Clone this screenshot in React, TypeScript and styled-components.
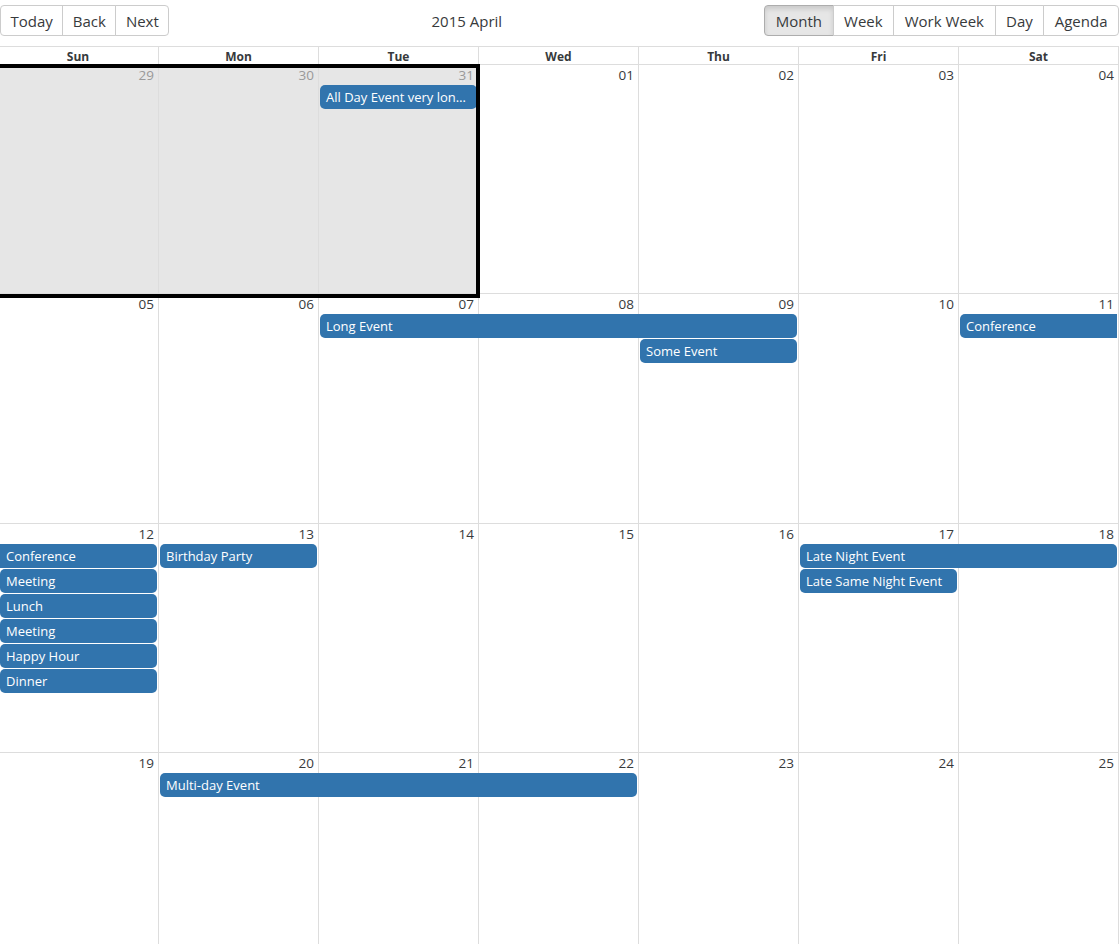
import styled, { createGlobalStyle } from 'styled-components';

type Day = { label: string; off?: boolean };
type CalEvent = {
  title: string;
  col: number;
  span: number;
  level: number;
  prior?: boolean;
  after?: boolean;
};
type Week = { days: Day[]; events: CalEvent[]; height: number };

const pad = (n: number) => (n < 10 ? '0' + n : String(n));

const makeDays = (nums: number[], offFn: (n: number, i: number) => boolean): Day[] =>
  nums.map((n, i) => ({ label: pad(n), off: offFn(n, i) }));

// only the four weeks that fit in the window
const weeks: Week[] = [
  {
    height: 228,
    days: makeDays([29, 30, 31, 1, 2, 3, 4], (_, i) => i < 3),
    events: [{ title: 'All Day Event very long title', col: 2, span: 1, level: 0 }],
  },
  {
    height: 230,
    days: makeDays([5, 6, 7, 8, 9, 10, 11], () => false),
    events: [
      { title: 'Long Event', col: 2, span: 3, level: 0 },
      { title: 'Conference', col: 6, span: 1, level: 0, after: true },
      { title: 'Some Event', col: 4, span: 1, level: 1 },
    ],
  },
  {
    height: 229,
    days: makeDays([12, 13, 14, 15, 16, 17, 18], () => false),
    events: [
      { title: 'Conference', col: 0, span: 1, level: 0, prior: true },
      { title: 'Meeting', col: 0, span: 1, level: 1 },
      { title: 'Lunch', col: 0, span: 1, level: 2 },
      { title: 'Meeting', col: 0, span: 1, level: 3 },
      { title: 'Happy Hour', col: 0, span: 1, level: 4 },
      { title: 'Dinner', col: 0, span: 1, level: 5 },
      { title: 'Birthday Party', col: 1, span: 1, level: 0 },
      { title: 'Late Night Event', col: 5, span: 2, level: 0 },
      { title: 'Late Same Night Event', col: 5, span: 1, level: 1 },
    ],
  },
  {
    height: 229,
    days: makeDays([19, 20, 21, 22, 23, 24, 25], () => false),
    events: [{ title: 'Multi-day Event', col: 1, span: 3, level: 0 }],
  },
];

const weekdays = ['Sun', 'Mon', 'Tue', 'Wed', 'Thu', 'Fri', 'Sat'];
const views = ['Month', 'Week', 'Work Week', 'Day', 'Agenda'];

const GlobalStyle = createGlobalStyle`
  html, body {
    margin: 0;
    padding: 0;
    background: #fff;
    overflow: hidden;
  }
  body {
    font-family: 'Open Sans', 'Liberation Sans', sans-serif;
    color: #373a3c;
  }
`;

const Page = styled.div`
  width: 1119px;
  height: 944px;
  overflow: hidden;
`;

const Toolbar = styled.div`
  display: flex;
  align-items: center;
  padding-top: 5px;
  margin-bottom: 10px;
  font-size: 15px;
`;

const BtnGroup = styled.div`
  display: flex;
`;

const Btn = styled.button<{ $active?: boolean; $padX: number }>`
  height: 31px;
  margin: 0;
  padding: 0 ${p => p.$padX}px;
  font: inherit;
  color: #373a3c;
  background: ${p => (p.$active ? '#e6e6e6' : '#fff')};
  border: 1px solid ${p => (p.$active ? '#adadad' : '#ccc')};
  box-shadow: ${p => (p.$active ? 'inset 0 3px 5px rgba(0, 0, 0, 0.125)' : 'none')};
  border-radius: 0;
  white-space: nowrap;

  & + & {
    margin-left: -1px;
  }
  &:first-child {
    border-radius: 4px 0 0 4px;
  }
  &:last-child {
    border-radius: 0 4px 4px 0;
  }
`;

const Label = styled.span`
  flex: 1;
  padding: 0 10px;
  text-align: center;
`;

const MonthView = styled.div`
  margin-left: -2px;
  width: 1121px;
  box-sizing: border-box;
  border-top: 1px solid #ddd;
  border-right: 1px solid #ddd;
`;

const HeaderRow = styled.div`
  display: grid;
  grid-template-columns: repeat(7, 160px);
`;

const HeaderCell = styled.div<{ $first: boolean }>`
  height: 18px;
  box-sizing: border-box;
  padding-top: 1px;
  line-height: 17px;
  text-align: center;
  font-size: 12px;
  font-weight: 700;
  color: #373a3c;
  border-bottom: 1px solid #ddd;
  border-left: ${p => (p.$first ? 'none' : '1px solid #ddd')};
`;

const MonthRow = styled.div<{ $first: boolean; $height: number }>`
  display: grid;
  grid-template-columns: repeat(7, 160px);
  grid-template-rows: 20px repeat(6, 25px) 1fr;
  height: ${p => p.$height}px;
  box-sizing: border-box;
  border-top: ${p => (p.$first ? 'none' : '1px solid #ddd')};
`;

const DayBg = styled.div<{ $col: number; $off?: boolean }>`
  grid-column: ${p => p.$col + 1};
  grid-row: 1 / -1;
  border-left: ${p => (p.$col === 0 ? 'none' : '1px solid #ddd')};
  background: ${p => (p.$off ? '#e6e6e6' : 'transparent')};
`;

const DateCell = styled.div<{ $col: number; $off?: boolean }>`
  grid-column: ${p => p.$col + 1};
  grid-row: 1;
  padding-right: 4px;
  text-align: right;
  font-size: 13.5px;
  line-height: 20px;
  color: ${p => (p.$off ? '#999' : '#373a3c')};
`;

const Segment = styled.div<{ $col: number; $span: number; $level: number }>`
  grid-column: ${p => p.$col + 1} / span ${p => p.$span};
  grid-row: ${p => p.$level + 2};
  min-width: 0;
  padding: 0 1px 1px 2px;
  z-index: 1;
`;

const EventBox = styled.div<{ $prior?: boolean; $after?: boolean }>`
  height: 24px;
  line-height: 24px;
  padding: 0 5px 0 6px;
  box-sizing: border-box;
  background: #3174ad;
  color: #fff;
  font-size: 13px;
  border-radius: ${p => (p.$prior ? '0' : '5px')} ${p => (p.$after ? '0 0' : '5px 5px')}
    ${p => (p.$prior ? '0' : '5px')};
  white-space: nowrap;
  overflow: hidden;
  text-overflow: ellipsis;
  cursor: pointer;
`;

const SelectionFrame = styled.div`
  grid-column: 1 / 4;
  grid-row: 1 / -1;
  margin: -1px -1.5px -5px -10px;
  border: 4.4px solid #000;
  z-index: 2;
  pointer-events: none;
`;

export default function App() {
  return (
    <Page>
      <GlobalStyle />
      <Toolbar>
        <BtnGroup>
          <Btn $padX={9.5}>Today</Btn>
          <Btn $padX={9.5}>Back</Btn>
          <Btn $padX={9.5}>Next</Btn>
        </BtnGroup>
        <Label>2015 April</Label>
        <BtnGroup>
          {views.map(v => (
            <Btn key={v} $padX={10.5} $active={v === 'Month'}>
              {v}
            </Btn>
          ))}
        </BtnGroup>
      </Toolbar>
      <MonthView>
        <HeaderRow>
          {weekdays.map((d, i) => (
            <HeaderCell key={d} $first={i === 0}>
              {d}
            </HeaderCell>
          ))}
        </HeaderRow>
        {weeks.map((w, wi) => (
          <MonthRow key={wi} $first={wi === 0} $height={w.height}>
            {w.days.map((d, i) => (
              <DayBg key={'bg' + i} $col={i} $off={d.off} />
            ))}
            {w.days.map((d, i) => (
              <DateCell key={'d' + i} $col={i} $off={d.off}>
                {d.label}
              </DateCell>
            ))}
            {w.events.map((e, ei) => (
              <Segment key={'e' + ei} $col={e.col} $span={e.span} $level={e.level}>
                <EventBox $prior={e.prior} $after={e.after} title={e.title}>
                  {e.title}
                </EventBox>
              </Segment>
            ))}
            {wi === 0 && <SelectionFrame />}
          </MonthRow>
        ))}
      </MonthView>
    </Page>
  );
}
